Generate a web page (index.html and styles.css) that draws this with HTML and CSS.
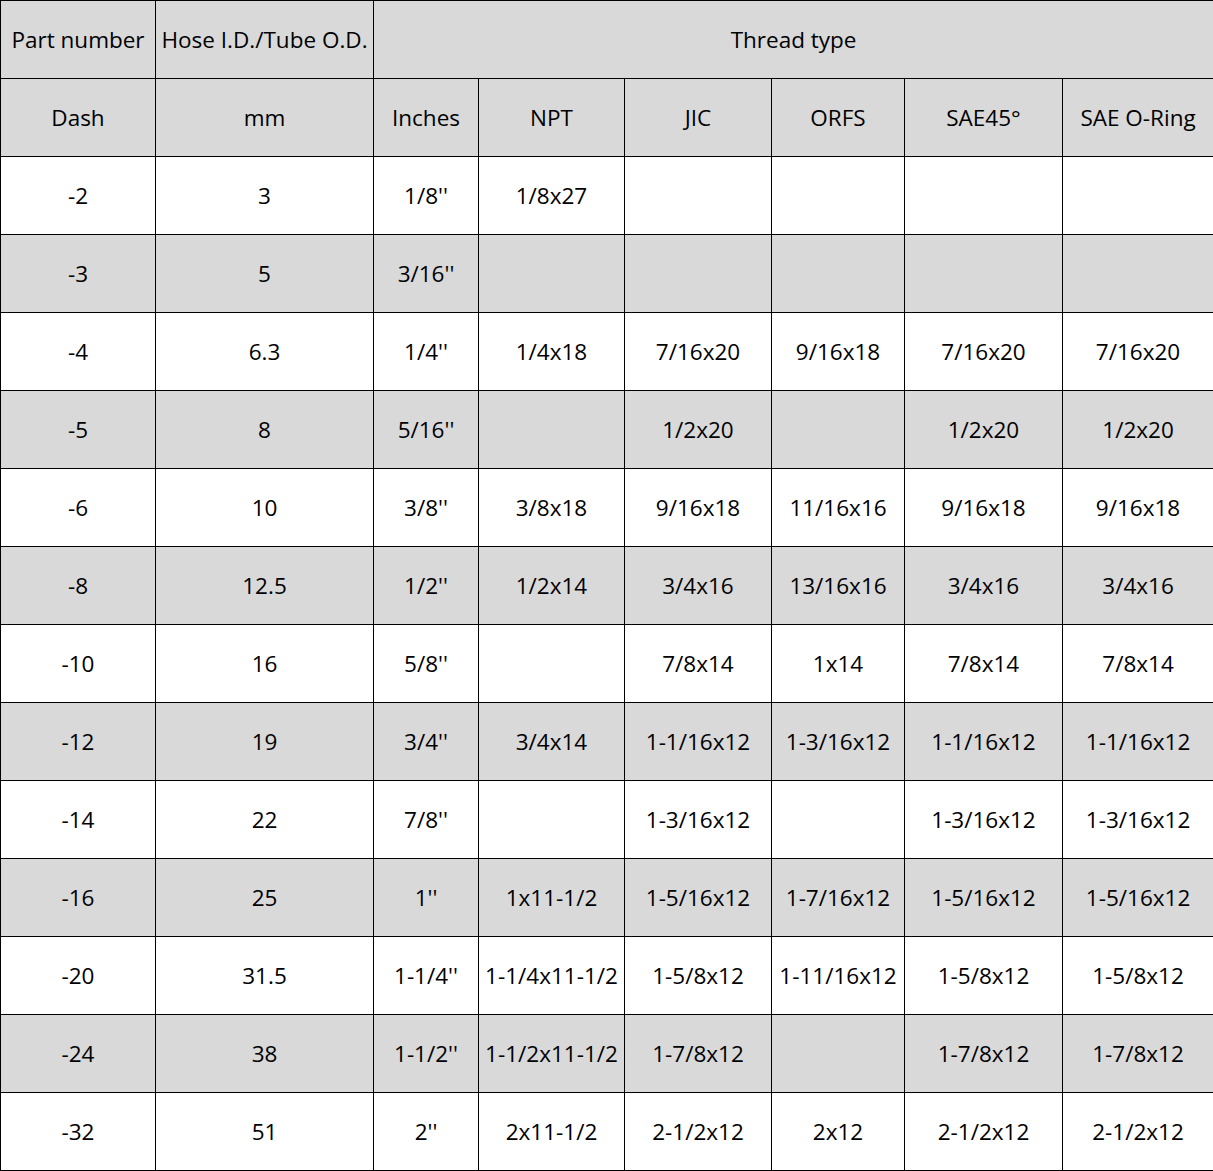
FILE: index.html
```html
<!DOCTYPE html>
<html>
<head>
<meta charset="utf-8">
<link rel="stylesheet" href="styles.css">
</head>
<body>
<table class="spec">
<colgroup>
<col class="c1"><col class="c2"><col class="c3"><col class="c4"><col class="c5"><col class="c6"><col class="c7"><col class="c8">
</colgroup>
<tr class="g"><td>Part number</td><td>Hose I.D./Tube O.D.</td><td colspan="6">Thread type</td></tr>
<tr class="g"><td>Dash</td><td>mm</td><td>Inches</td><td>NPT</td><td>JIC</td><td>ORFS</td><td>SAE45°</td><td>SAE O-Ring</td></tr>
<tr><td>-2</td><td>3</td><td>1/8''</td><td>1/8x27</td><td></td><td></td><td></td><td></td></tr>
<tr class="g"><td>-3</td><td>5</td><td>3/16''</td><td></td><td></td><td></td><td></td><td></td></tr>
<tr><td>-4</td><td>6.3</td><td>1/4''</td><td>1/4x18</td><td>7/16x20</td><td>9/16x18</td><td>7/16x20</td><td>7/16x20</td></tr>
<tr class="g"><td>-5</td><td>8</td><td>5/16''</td><td></td><td>1/2x20</td><td></td><td>1/2x20</td><td>1/2x20</td></tr>
<tr><td>-6</td><td>10</td><td>3/8''</td><td>3/8x18</td><td>9/16x18</td><td>11/16x16</td><td>9/16x18</td><td>9/16x18</td></tr>
<tr class="g"><td>-8</td><td>12.5</td><td>1/2''</td><td>1/2x14</td><td>3/4x16</td><td>13/16x16</td><td>3/4x16</td><td>3/4x16</td></tr>
<tr><td>-10</td><td>16</td><td>5/8''</td><td></td><td>7/8x14</td><td>1x14</td><td>7/8x14</td><td>7/8x14</td></tr>
<tr class="g"><td>-12</td><td>19</td><td>3/4''</td><td>3/4x14</td><td>1-1/16x12</td><td>1-3/16x12</td><td>1-1/16x12</td><td>1-1/16x12</td></tr>
<tr><td>-14</td><td>22</td><td>7/8''</td><td></td><td>1-3/16x12</td><td></td><td>1-3/16x12</td><td>1-3/16x12</td></tr>
<tr class="g"><td>-16</td><td>25</td><td>1''</td><td>1x11-1/2</td><td>1-5/16x12</td><td>1-7/16x12</td><td>1-5/16x12</td><td>1-5/16x12</td></tr>
<tr><td>-20</td><td>31.5</td><td>1-1/4''</td><td>1-1/4x11-1/2</td><td>1-5/8x12</td><td>1-11/16x12</td><td>1-5/8x12</td><td>1-5/8x12</td></tr>
<tr class="g"><td>-24</td><td>38</td><td>1-1/2''</td><td>1-1/2x11-1/2</td><td>1-7/8x12</td><td></td><td>1-7/8x12</td><td>1-7/8x12</td></tr>
<tr><td>-32</td><td>51</td><td>2''</td><td>2x11-1/2</td><td>2-1/2x12</td><td>2x12</td><td>2-1/2x12</td><td>2-1/2x12</td></tr>
</table>
</body>
</html>
```
FILE: styles.css
```css
html, body {
  margin: 0;
  padding: 0;
  background: #ffffff;
}
.spec {
  border-collapse: collapse;
  table-layout: fixed;
  width: 1213px;
  font-family: "Open Sans", "Noto Sans", sans-serif;
  font-size: 22.5px;
  color: #000;
}
.c1 { width: 155px; }
.c2 { width: 218px; }
.c3 { width: 105px; }
.c4 { width: 146px; }
.c5 { width: 147px; }
.c6 { width: 133px; }
.c7 { width: 158px; }
.c8 { width: 151px; }
.spec td {
  border: 1px solid #000;
  height: 77px;
  padding: 0 0 1px 0;
  text-align: center;
  vertical-align: middle;
  white-space: nowrap;
  overflow: hidden;
  box-sizing: border-box;
}
.spec tr { height: 78px; }
.g td { background: #d9d9d9; }
```
